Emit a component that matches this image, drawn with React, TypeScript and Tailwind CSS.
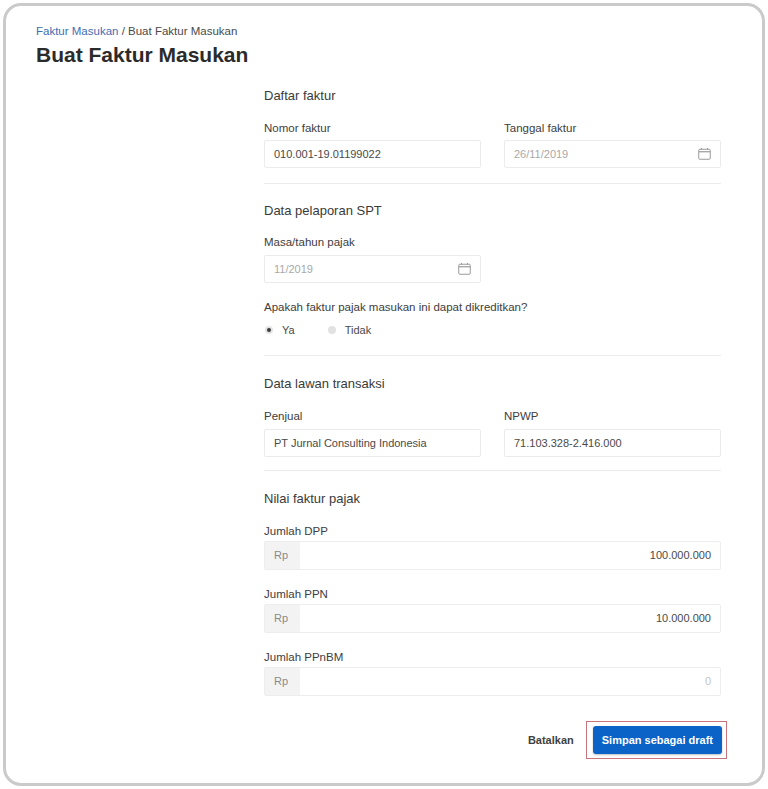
import React from 'react';

const font = { fontFamily: '"Liberation Sans", Arial, sans-serif' };

const CalendarIcon = () => (
  <svg width="13" height="12" viewBox="0 0 13 12" fill="none" className="text-[#9a9a9a]">
    <rect x="0.75" y="1.25" width="11.5" height="10" rx="1" stroke="currentColor" strokeWidth="1" />
    <line x1="0.75" y1="3.75" x2="12.25" y2="3.75" stroke="currentColor" strokeWidth="1.2" />
    <line x1="3.5" y1="0" x2="3.5" y2="1.5" stroke="currentColor" strokeWidth="1" />
    <line x1="9.5" y1="0" x2="9.5" y2="1.5" stroke="currentColor" strokeWidth="1" />
  </svg>
);

const Label = ({ children, className = '' }: { children: React.ReactNode; className?: string }) => (
  <div className={`text-[11.5px] leading-[14px] text-[#3d3d3d] ${className}`}>{children}</div>
);

const SectionTitle = ({ children, className = '' }: { children: React.ReactNode; className?: string }) => (
  <div className={`text-[13px] leading-[16px] text-[#3a3a3a] ${className}`}>{children}</div>
);

const Divider = ({ className = '' }: { className?: string }) => (
  <div className={`border-t border-[#ececec] ${className}`} />
);

type InputProps = { value: string; muted?: boolean; calendar?: boolean };

const TextInput = ({ value, muted, calendar }: InputProps) => (
  <div className="h-[28px] border border-[#ebebeb] rounded-[2px] flex items-center justify-between px-[9px] bg-white">
    <span className={`text-[11px] ${muted ? 'text-[#a8a8a8]' : 'text-[#4a4a4a]'}`}>{value}</span>
    {calendar && <CalendarIcon />}
  </div>
);

const MoneyInput = ({ value, muted }: { value: string; muted?: boolean }) => (
  <div className="h-[29px] border border-[#ededed] rounded-[2px] flex items-stretch bg-white">
    <div className="w-[35px] bg-[#f3f3f3] flex items-center pl-[9px] text-[11px] text-[#8a8a8a]">Rp</div>
    <div className={`flex-1 flex items-center justify-end pr-[9px] text-[11px] ${muted ? 'text-[#c4c4c4]' : 'text-[#4a4a4a]'}`}>
      {value}
    </div>
  </div>
);

export default function App() {
  return (
    <div className="w-[768px] h-[789px] bg-white p-[3px]" style={font}>
      <div className="h-full border-[3px] border-[#cacaca] rounded-[18px] pl-[30px] pt-[18px]">
        <div className="text-[11.5px] leading-[14px]">
          <span className="text-[#3f6db4]">Faktur Masukan</span>
          <span className="text-[#4a4a4a]"> / Buat Faktur Masukan</span>
        </div>
        <h1 className="mt-[5px] text-[21px] leading-[24px] font-bold text-[#2b2b2b]">Buat Faktur Masukan</h1>

        <div className="ml-[228px] w-[457px]">
          <SectionTitle className="mt-[21px]">Daftar faktur</SectionTitle>
          <div className="mt-[17px] grid grid-cols-2 gap-x-[23px]">
            <Label>Nomor faktur</Label>
            <Label>Tanggal faktur</Label>
            <div className="mt-[5px]">
              <TextInput value="010.001-19.01199022" />
            </div>
            <div className="mt-[5px]">
              <TextInput value="26/11/2019" muted calendar />
            </div>
          </div>
          <Divider className="mt-[15px]" />

          <SectionTitle className="mt-[19px]">Data pelaporan SPT</SectionTitle>
          <Label className="mt-[16px]">Masa/tahun pajak</Label>
          <div className="mt-[6px] w-[217px]">
            <TextInput value="11/2019" muted calendar />
          </div>
          <Label className="mt-[17px]">Apakah faktur pajak masukan ini dapat dikreditkan?</Label>
          <div className="mt-[9px] flex items-center text-[11px] leading-[14px] text-[#4a4a4a]">
            <span className="w-[8px] h-[8px] rounded-full bg-[#e4e4e4] flex items-center justify-center ml-[1px]">
              <span className="w-[4px] h-[4px] rounded-full bg-[#3a3a3a]" />
            </span>
            <span className="ml-[9px]">Ya</span>
            <span className="ml-[33px] w-[8px] h-[8px] rounded-full bg-[#e2e2e2]" />
            <span className="ml-[9px]">Tidak</span>
          </div>
          <Divider className="mt-[18px]" />

          <SectionTitle className="mt-[20px]">Data lawan transaksi</SectionTitle>
          <div className="mt-[17px] grid grid-cols-2 gap-x-[23px]">
            <Label>Penjual</Label>
            <Label>NPWP</Label>
            <div className="mt-[6px]">
              <TextInput value="PT Jurnal Consulting Indonesia" />
            </div>
            <div className="mt-[6px]">
              <TextInput value="71.103.328-2.416.000" />
            </div>
          </div>
          <Divider className="mt-[13px]" />

          <SectionTitle className="mt-[20px]">Nilai faktur pajak</SectionTitle>
          <Label className="mt-[17px]">Jumlah DPP</Label>
          <div className="mt-[3px]">
            <MoneyInput value="100.000.000" />
          </div>
          <Label className="mt-[17px]">Jumlah PPN</Label>
          <div className="mt-[3px]">
            <MoneyInput value="10.000.000" />
          </div>
          <Label className="mt-[17px]">Jumlah PPnBM</Label>
          <div className="mt-[3px]">
            <MoneyInput value="0" muted />
          </div>

          <div className="mt-[25px] flex items-center justify-end mr-[-6px]">
            <button className="text-[11px] font-bold text-[#3f3f3f] mr-[12px]">Batalkan</button>
            <div className="border border-[#c9737b] pl-[6px] pr-[4px] py-[4px]">
              <button className="h-[28px] px-[9px] rounded-[3px] bg-[#0b63c8] text-white text-[11px] font-bold shadow-[0_1px_2px_rgba(0,0,0,0.25)]">
                Simpan sebagai draft
              </button>
            </div>
          </div>
        </div>
      </div>
    </div>
  );
}
